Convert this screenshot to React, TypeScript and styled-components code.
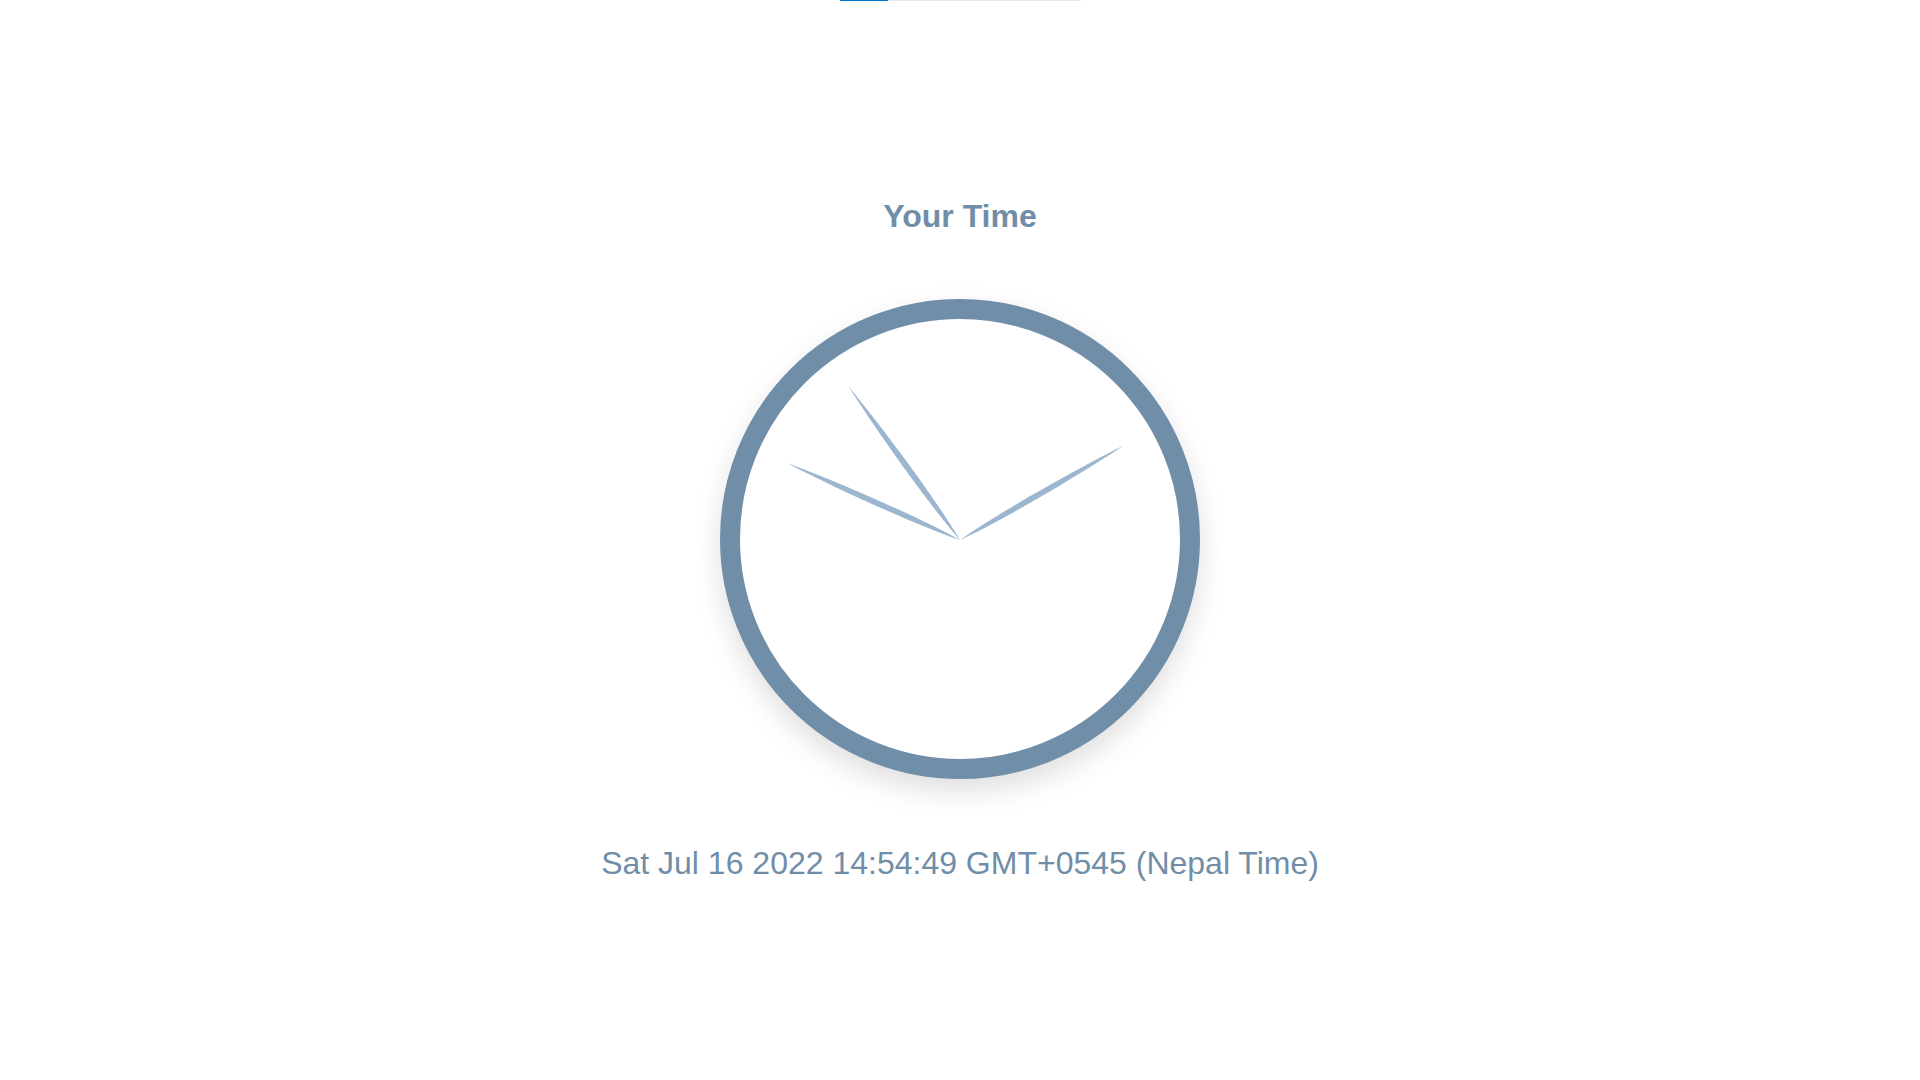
import React from "react";
import styled, { createGlobalStyle } from "styled-components";

const GlobalStyle = createGlobalStyle`
  html, body {
    margin: 0;
    padding: 0;
    background: #ffffff;
  }
  body {
    font-family: "Liberation Sans", Arial, sans-serif;
  }
`;

const Page = styled.div`
  display: flex;
  flex-direction: column;
  align-items: center;
  min-height: 1080px;
`;

const Progress = styled.div`
  display: flex;
  width: 241px;
  height: 1px;
  background: #e6e6e6;
`;

const ProgressFill = styled.div<{ $pct: number }>`
  width: ${(p) => p.$pct}%;
  height: 100%;
  background: #0078d4;
`;

const Title = styled.h1`
  margin: 197px 0 0;
  font-size: 32px;
  line-height: 37px;
  font-weight: 700;
  color: #718ea8;
`;

const Face = styled.div`
  margin-top: 64px;
  width: 480px;
  height: 480px;
  box-sizing: border-box;
  border: 20px solid #718ea8;
  border-radius: 50%;
  background: #ffffff;
  box-shadow: 0 12px 28px rgba(0, 0, 0, 0.13);
  display: flex;
`;

const HandsSvg = styled.svg`
  display: block;
  width: 440px;
  height: 440px;
`;

const DateLine = styled.div`
  margin-top: 66px;
  font-size: 32px;
  line-height: 37px;
  color: #718ea8;
`;

const HAND_LEN = 190;

const Hand: React.FC<{ angle: number }> = ({ angle }) => (
  <path
    transform={`rotate(${angle})`}
    d={`M0 0 C3.9 -40 3.9 -125 0 -${HAND_LEN} C-3.9 -125 -3.9 -40 0 0 Z`}
    fill="#9cb6d0"
  />
);

export default function App() {
  const hour = 60;
  const minute = 324;
  const second = 294;
  return (
    <>
      <GlobalStyle />
      <Page>
        <Progress>
          <ProgressFill $pct={20} />
        </Progress>
        <Title>Your Time</Title>
        <Face>
          <HandsSvg viewBox="-220 -221 440 440">
            <Hand angle={hour} />
            <Hand angle={minute} />
            <Hand angle={second} />
          </HandsSvg>
        </Face>
        <DateLine>Sat Jul 16 2022 14:54:49 GMT+0545 (Nepal Time)</DateLine>
      </Page>
    </>
  );
}
